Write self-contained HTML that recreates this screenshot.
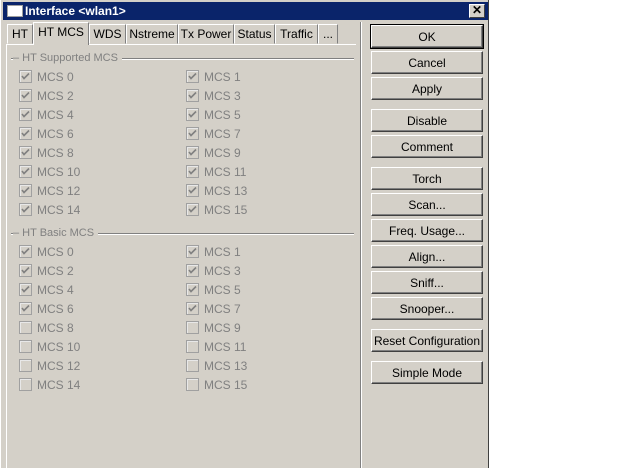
<!DOCTYPE html>
<html><head><style>
*{margin:0;padding:0;box-sizing:border-box}
body{width:640px;height:468px;background:#fff;position:relative;overflow:hidden;font-family:"Liberation Sans",sans-serif;font-size:11px}
#win{position:absolute;left:0;top:0;width:489px;height:468px;background:#d4d0c8;border-left:1px solid #fff;border-right:1px solid #404040}
#title{position:absolute;left:2px;top:2px;width:485px;height:18px;background:#0a246a;color:#fff;font-weight:bold;font-size:12px;line-height:18px;padding-left:22px}
#ticon{position:absolute;left:4px;top:3px;width:16px;height:12px;background:#fff;border:1px solid #a0a0a0}
#close{position:absolute;right:3px;top:2px;width:16px;height:14px;background:#d4d0c8;border:1px solid;border-color:#fff #404040 #404040 #fff;color:#000;font-size:12px;line-height:11px;text-align:center;font-weight:bold}
.tab{position:absolute;top:24px;height:20px;border:1px solid;border-color:#fff #808080 transparent #fff;line-height:19px;text-align:center;color:#000;font-size:12px}
.tab.act{top:22px;height:23px;background:#d4d0c8;border-bottom:none;z-index:2}
#panel{position:absolute;left:5px;top:44px;width:350px;height:424px;border-left:1px solid #fff;border-top:1px solid #fff}
#sep{position:absolute;left:359px;top:22px;width:2px;height:446px;border-left:1px solid #808080;border-right:1px solid #fff}
.grp{position:absolute;left:12px;color:#808080;font-size:11px;background:#d4d0c8;padding-right:4px}
.gl{position:absolute;left:10px;width:343px;height:2px;border-top:1px solid #808080;border-bottom:1px solid #fff}
.cb{position:absolute;width:13px;height:13px;border:1px solid #a0a0a0;background:#d4d0c8;box-shadow:inset 1px 1px 0 #e8e8e8}
.cb svg{position:absolute;left:1px;top:1px}
.lb{position:absolute;color:#808080;font-size:12px}
.btn{position:absolute;left:370px;width:112px;height:23px;border:1px solid;border-color:#fff #404040 #404040 #fff;box-shadow:inset -1px -1px 0 #808080;text-align:center;line-height:22px;font-size:12px;color:#000}
.btn.def{outline:1px solid #000}
</style></head><body>
<div id="win">
<div id="title"><div id="ticon"></div>Interface &lt;wlan1&gt;<div id="close">✕</div></div>
<div class="tab" style="left:6px;width:26px">HT</div>
<div class="tab act" style="left:32px;width:56px">HT MCS</div>
<div class="tab" style="left:88px;width:37px">WDS</div>
<div class="tab" style="left:125px;width:52px">Nstreme</div>
<div class="tab" style="left:177px;width:56px">Tx Power</div>
<div class="tab" style="left:233px;width:41px">Status</div>
<div class="tab" style="left:274px;width:43px">Traffic</div>
<div class="tab" style="left:317px;width:20px">...</div>
<div id="panel"></div>
<div id="sep"></div>
<div class="gl" style="top:58px"></div><div class="grp" style="top:52px">– HT Supported MCS</div>
<div class="gl" style="top:233px"></div><div class="grp" style="top:227px">– HT Basic MCS</div>
<div id="cbs"></div>
<div class="btn def" style="top:25px">OK</div>
<div class="btn" style="top:51px">Cancel</div>
<div class="btn" style="top:77px">Apply</div>
<div class="btn" style="top:109px">Disable</div>
<div class="btn" style="top:135px">Comment</div>
<div class="btn" style="top:167px">Torch</div>
<div class="btn" style="top:193px">Scan...</div>
<div class="btn" style="top:219px">Freq. Usage...</div>
<div class="btn" style="top:245px">Align...</div>
<div class="btn" style="top:271px">Sniff...</div>
<div class="btn" style="top:297px">Snooper...</div>
<div class="btn" style="top:329px">Reset Configuration</div>
<div class="btn" style="top:361px">Simple Mode</div>
</div>
<script>
var h='',chk='<svg width="9" height="9"><path d="M1 4 L3 6.5 L8 1.5" stroke="#808080" stroke-width="1.6" fill="none"/></svg>';
function row(y,n,c){for(var k=0;k<2;k++){var x=k?185:18;h+='<div class="cb" style="left:'+x+'px;top:'+(y-6)+'px">'+(c?chk:'')+'</div><div class="lb" style="left:'+(x+18)+'px;top:'+(y-6)+'px">MCS '+(n+k)+'</div>';}}
for(var i=0;i<8;i++)row(76+i*19,i*2,true);
for(var i=0;i<8;i++)row(251+i*19,i*2,i<4);
document.getElementById('cbs').innerHTML=h;
</script>
</body></html>
